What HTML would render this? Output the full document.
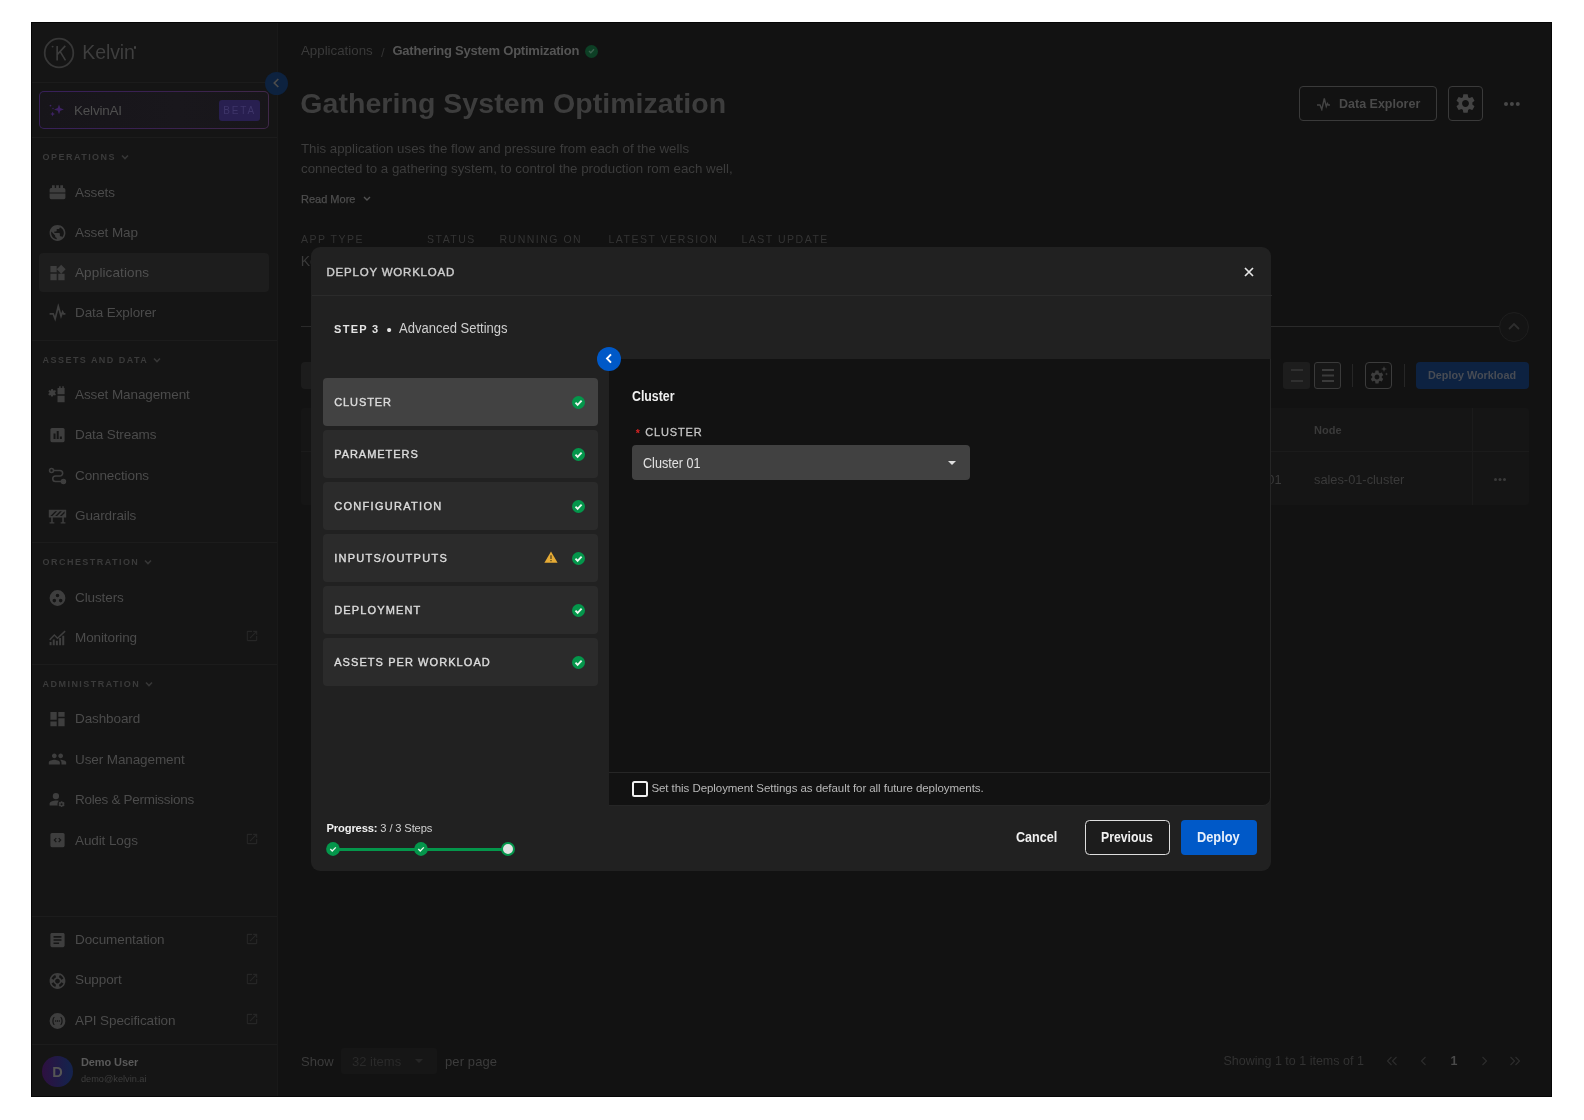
<!DOCTYPE html>
<html lang="en">
<head>
<meta charset="utf-8">
<title>Kelvin - Gathering System Optimization</title>
<style>
*{box-sizing:border-box;margin:0;padding:0}
html,body{width:1584px;height:1120px;background:#fff;overflow:hidden}
body{position:relative;font-family:"Liberation Sans",sans-serif;color:#4a4a4a;-webkit-font-smoothing:antialiased}
.abs,.abs>*{position:absolute}
#frame{position:absolute;left:31px;top:22px;width:1521px;height:1075px;background:#121212;overflow:hidden}
#frame:after{content:"";position:absolute;inset:0;border:1px solid #050505;pointer-events:none;z-index:50}
/* all children of frame use frame coords = page coords - (31,22) via wrapper */
#w{position:absolute;left:-31px;top:-22px;width:1584px;height:1120px;will-change:transform}
#w *{position:absolute}
.t{white-space:nowrap;line-height:1;transform:translateY(-50%) scaleX(var(--sx,1));transform-origin:0 50%}
/* sidebar */
#sb{left:31px;top:22px;width:247px;height:1075px;background:#151515;border-right:1px solid #191919}
.hr{height:1px;background:#1c1c1c;left:31px;width:246px}
.sec{font-size:9px;font-weight:700;letter-spacing:1.45px;color:#3b3b3b;left:42.6px}
#w .sec svg{position:static;display:inline-block;width:8px;height:6px;margin-left:5px;fill:none;stroke:#373737;stroke-width:1.6;vertical-align:-1.3px}
.nav{font-size:13.5px;color:#4b4b4b;left:75px;letter-spacing:-0.1px}
.ico{left:48.4px;width:19px;height:19px;fill:#3e3e3e;transform:translateY(-50%)}
.ext{left:244.8px;width:14px;height:14px;margin-top:-1.3px;fill:#262626;transform:translateY(-50%)}
.chev{width:8px;height:6px;fill:none;stroke:#373737;stroke-width:1.6;transform:translateY(-50%)}
.dsc{font-size:13.3px;color:#3c3c3c}
.lbl{font-size:10.5px;color:#343434;letter-spacing:1.5px}
.mh{font-size:11.5px;font-weight:400;-webkit-text-stroke:.4px #cdcdcd;letter-spacing:.79px;color:#cdcdcd}
.mi{left:323px;width:275px;height:48px;border-radius:4px;background:#2b2b2b}
.ml{left:334.2px;font-size:11px;font-weight:400;-webkit-text-stroke:.4px #dcdcdc;letter-spacing:1.45px;color:#dcdcdc}
.ck{left:571.8px;width:13px;height:13px}
.ck circle{fill:#04964b}
.ck path{fill:none;stroke:#eaf7ef;stroke-width:1.9}
</style>
</head>
<body>
<div id="frame"><div id="w">
<!--SIDEBAR-->
<div id="sb"></div>
<!-- logo -->
<svg style="left:42.75px;top:36.55px;width:32px;height:32px" viewBox="0 0 32 32"><circle cx="16" cy="16" r="14.3" fill="none" stroke="#373737" stroke-width="1.8"/><circle cx="9.6" cy="9.6" r=".95" fill="#3c3c3c"/><path d="M14.150 8.900v14.500M22.300 8.900l-8.150 8.700M17.200 14.600l5.300 8.800" fill="none" stroke="#3d3d3d" stroke-width="1.600"/></svg>
<div class="t" style="left:82.3px;top:52.7px;font-size:19.5px;color:#3e3e3e;letter-spacing:-0.1px">Kelvin</div>
<div style="left:133.9px;top:46px;width:2.6px;height:2.6px;border-radius:50%;background:#444"></div>
<div class="hr" style="top:82px"></div>
<!-- collapse btn -->
<div style="left:265.3px;top:71.8px;width:23px;height:23px;border-radius:50%;background:#0d223f;z-index:3"></div>
<svg style="left:272.4px;top:78.3px;width:8px;height:10px;z-index:4" viewBox="0 0 8 10"><path d="M6.300 1L2.300 5l4 4" fill="none" stroke="#4c4c4c" stroke-width="1.7"/></svg>
<!-- KelvinAI -->
<div style="left:39px;top:91px;width:230px;height:38px;border-radius:5px;background:linear-gradient(90deg,#38205a,#3a2150 55%,#40284a)"></div><div style="left:40.3px;top:92.3px;width:227.4px;height:35.4px;border-radius:4px;background:linear-gradient(90deg,#17151a,#19171c 60%,#18161a)"></div>
<svg style="left:48px;top:103px;width:17px;height:14px" viewBox="0 0 17 14"><path d="M11 1.5l1.3 3.6 3.6 1.3-3.600 1.300L11 11.300 9.700 7.700 6.100 6.400l3.600-1.300z" fill="#3d2263"/><path d="M4.600 8.600l.7 1.700 1.700.7-1.700.7-.7 1.700-.7-1.700-1.700-.7 1.700-.7z" fill="#3d2263"/><circle cx="2.500" cy="2.600" r=".9" fill="#3d2263"/><circle cx="5" cy="5.500" r=".7" fill="#3d2263"/></svg>
<div class="t" style="left:74px;top:111px;font-size:13.5px;color:#4f4f4f;letter-spacing:-0.2px">KelvinAI</div>
<div style="left:219px;top:100px;width:41px;height:21px;border-radius:3px;background:#281f50"></div>
<div class="t" style="left:223.2px;top:111px;font-size:10px;color:#3e3569;letter-spacing:1.9px">BETA</div>
<div class="hr" style="top:137px"></div>

<div class="t sec" style="top:157px">OPERATIONS<svg viewBox="0 0 8 6"><path d="M1 1l3 3 3-3"/></svg></div>

<svg class="ico" style="top:192px" viewBox="0 0 24 24"><path d="M4 7h16a2 2 0 012 2v3.500H2V9a2 2 0 012-2zM2 14h20v5a2 2 0 01-2 2H4a2 2 0 01-2-2zM5 3.500h3.500V7H5zM10.250 3.500h3.500V7h-3.500zM15.500 3.500H19V7h-3.500z"/></svg>
<div class="t nav" style="top:192.5px">Assets</div>
<svg class="ico" style="top:232.500px" viewBox="0 0 24 24"><path d="M12 2C6.480 2 2 6.480 2 12s4.480 10 10 10 10-4.480 10-10S17.520 2 12 2zm-1 17.930c-3.950-.49-7-3.850-7-7.930 0-.62.080-1.210.210-1.790L9 15v1c0 1.100.9 2 2 2v1.930zm6.900-2.540c-.26-.81-1-1.390-1.900-1.390h-1v-3c0-.55-.45-1-1-1H8v-2h2c.55 0 1-.45 1-1V7h2c1.100 0 2-.9 2-2v-.41c2.930 1.190 5 4.060 5 7.410 0 2.080-.8 3.970-2.100 5.390z"/></svg>
<div class="t nav" style="top:232.5px">Asset Map</div>
<div style="left:39px;top:253px;width:230px;height:39px;border-radius:4px;background:#1d1d1d"></div>
<svg class="ico" style="top:272.500px" viewBox="0 0 24 24"><path d="M13 13v8h8v-8h-8zM3 21h8v-8H3v8zM3 3v8h8V3H3zm13.660-1.310L11 7.340 16.660 13l5.660-5.660-5.660-5.650z"/></svg>
<div class="t nav" style="top:273.4px;letter-spacing:.12px;color:#505050">Applications</div>
<svg class="ico" style="top:313px;fill:none;stroke:#3e3e3e;stroke-width:2.2" viewBox="0 0 24 24"><path d="M2 13h4.500l2.500 6.500L13 3.500l3.500 12.500 2-5.500 1.300 2.500H22"/></svg>
<div class="t nav" style="top:313.4px">Data Explorer</div>
<div class="hr" style="top:340px"></div>

<div class="t sec" style="top:359.500px">ASSETS AND DATA<svg viewBox="0 0 8 6"><path d="M1 1l3 3 3-3"/></svg></div>
<svg class="ico" style="top:394.500px" viewBox="0 0 24 24"><path d="M12 3h9v8h-9zM12 13h9v8h-9zM14 1h2v2h-2zM18 1h2v2h-2zM6 4.500l1 2 2-.7 1 1.700-1.500 1.500L10 11l-1 1.700-2-.7-1 2H4l-.7-2-2 .5-1-1.700L2 9 .5 7.500l1-1.700 2 .7.700-2z"/></svg>
<div class="t nav" style="top:394.500px">Asset Management</div>
<svg class="ico" style="top:435px" viewBox="0 0 24 24"><path fill-rule="evenodd" d="M5 3h14a2 2 0 012 2v14a2 2 0 01-2 2H5a2 2 0 01-2-2V5a2 2 0 012-2zm2 7v7h2.500v-7zm4-3v10h2.500V7zm4 7v3h2.500v-3z"/></svg>
<div class="t nav" style="top:435px">Data Streams</div>
<svg class="ico" style="top:475.500px;fill:none;stroke:#3e3e3e;stroke-width:2" viewBox="0 0 24 24"><circle cx="4.500" cy="5" r="2.500"/><path d="M7 5h8a3.500 3.500 0 010 7H9.500a3.500 3.500 0 000 7H17"/><circle cx="19.500" cy="19" r="2.500" fill="#3e3e3e"/></svg>
<div class="t nav" style="top:475.500px">Connections</div>
<svg class="ico" style="top:515.500px" viewBox="0 0 24 24"><path fill-rule="evenodd" d="M1 4h22v10H1zM4 14h2v6h2v1.500H2V20h2zM18 14h2v6h2v1.500h-6V20h2zM3 12l6-6h2.500l-6 6zm6 0l6-6h2.500l-6 6zm6 0l6-6v2.500L17.500 12z"/></svg>
<div class="t nav" style="top:515.500px">Guardrails</div>
<div class="hr" style="top:542px"></div>

<div class="t sec" style="top:562px">ORCHESTRATION<svg viewBox="0 0 8 6"><path d="M1 1l3 3 3-3"/></svg></div>
<svg class="ico" style="top:597.500px" viewBox="0 0 24 24"><path fill-rule="evenodd" d="M12 2a10 10 0 100 20 10 10 0 000-20zm0 4.500a2.300 2.300 0 110 4.600 2.300 2.300 0 010-4.600zM8 13a2.300 2.300 0 110 4.600A2.300 2.300 0 018 13zm8 0a2.300 2.300 0 110 4.600 2.300 2.300 0 010-4.600z"/></svg>
<div class="t nav" style="top:597.500px">Clusters</div>
<svg class="ico" style="top:637.500px" viewBox="0 0 24 24"><path d="M2 17h2.500v4H2zM6 14h2.500v7H6zM10 15.500h2.500V21H10zM14 12h2.500v9H14zM18 9h2.500v12H18zM1.500 13.500L8 7l4 4 9-8.500 1.300 1.500L12 13.500l-4-4-5.200 5.500z"/></svg>
<div class="t nav" style="top:637.500px">Monitoring</div>
<svg class="ext" style="top:637.500px" viewBox="0 0 24 24"><path d="M19 19H5V5h7V3H5c-1.110 0-2 .9-2 2v14c0 1.100.89 2 2 2h14c1.100 0 2-.9 2-2v-7h-2v7zM14 3v2h3.590l-9.830 9.830 1.410 1.410L19 6.410V10h2V3h-7z"/></svg>
<div class="hr" style="top:664px"></div>

<div class="t sec" style="top:683.500px">ADMINISTRATION<svg viewBox="0 0 8 6"><path d="M1 1l3 3 3-3"/></svg></div>
<svg class="ico" style="top:719px" viewBox="0 0 24 24"><path d="M3 13h8V3H3v10zm0 8h8v-6H3v6zm10 0h8V11h-8v10zm0-18v6h8V3h-8z"/></svg>
<div class="t nav" style="top:719px">Dashboard</div>
<svg class="ico" style="top:759px" viewBox="0 0 24 24"><path d="M16 11c1.660 0 2.990-1.340 2.990-3S17.660 5 16 5c-1.660 0-3 1.340-3 3s1.340 3 3 3zm-8 0c1.660 0 2.990-1.340 2.990-3S9.660 5 8 5C6.340 5 5 6.340 5 8s1.340 3 3 3zm0 2c-2.330 0-7 1.170-7 3.500V19h14v-2.500c0-2.330-4.670-3.500-7-3.500zm8 0c-.29 0-.62.020-.97.050 1.160.84 1.970 1.970 1.970 3.450V19h6v-2.500c0-2.330-4.670-3.500-7-3.500z"/></svg>
<div class="t nav" style="top:759.500px">User Management</div>
<svg class="ico" style="top:799.500px" viewBox="0 0 24 24"><circle cx="10" cy="7" r="4"/><path d="M10 12.500c1.200 0 2.500.2 3.700.6-1 1.100-1.700 2.600-1.700 4.200 0 .6.100 1.200.3 1.700H2v-2.500c0-2.700 5.300-4 8-4zM18 13.500l.6 1.400 1.500-.3.900 1.500-1 1.100 1 1.100-.9 1.500-1.500-.3-.6 1.400h-1.700l-.6-1.400-1.500.3-.9-1.500 1-1.100-1-1.100.9-1.500 1.500.3.600-1.400zm-.85 2.600a1.200 1.200 0 100 2.400 1.200 1.200 0 000-2.400z" fill-rule="evenodd"/></svg>
<div class="t nav" style="top:800px;letter-spacing:-0.3px">Roles &amp; Permissions</div>
<svg class="ico" style="top:840px" viewBox="0 0 24 24"><path fill-rule="evenodd" d="M5 3h14a2 2 0 012 2v14a2 2 0 01-2 2H5a2 2 0 01-2-2V5a2 2 0 012-2zm5 6l-3 3 3 3 1-1-2-2 2-2zm4 0l-1 1 2 2-2 2 1 1 3-3z"/></svg>
<div class="t nav" style="top:840.500px">Audit Logs</div>
<svg class="ext" style="top:840.500px" viewBox="0 0 24 24"><path d="M19 19H5V5h7V3H5c-1.110 0-2 .9-2 2v14c0 1.100.89 2 2 2h14c1.100 0 2-.9 2-2v-7h-2v7zM14 3v2h3.590l-9.830 9.830 1.410 1.410L19 6.410V10h2V3h-7z"/></svg>
<div class="hr" style="top:916px"></div>

<svg class="ico" style="top:940px" viewBox="0 0 24 24"><path d="M19 3H5c-1.100 0-2 .9-2 2v14c0 1.100.9 2 2 2h14c1.100 0 2-.9 2-2V5c0-1.100-.9-2-2-2zm-5 14H7v-2h7v2zm3-4H7v-2h10v2zm0-4H7V7h10v2z"/></svg>
<div class="t nav" style="top:940px">Documentation</div>
<svg class="ext" style="top:940.500px" viewBox="0 0 24 24"><path d="M19 19H5V5h7V3H5c-1.110 0-2 .9-2 2v14c0 1.100.89 2 2 2h14c1.100 0 2-.9 2-2v-7h-2v7zM14 3v2h3.590l-9.830 9.830 1.410 1.410L19 6.410V10h2V3h-7z"/></svg>
<svg class="ico" style="top:980.500px" viewBox="0 0 24 24"><path d="M12 2C6.480 2 2 6.480 2 12s4.480 10 10 10 10-4.480 10-10S17.520 2 12 2zm7.460 7.120l-2.780 1.150c-.51-1.360-1.580-2.440-2.950-2.940l1.150-2.780c2.100.8 3.770 2.470 4.580 4.570zM12 15c-1.660 0-3-1.340-3-3s1.340-3 3-3 3 1.340 3 3-1.340 3-3 3zM9.130 4.540l1.170 2.780c-1.380.5-2.470 1.590-2.980 2.970L4.540 9.130c.81-2.110 2.480-3.780 4.590-4.590zM4.540 14.870l2.780-1.150c.51 1.380 1.590 2.460 2.970 2.960l-1.170 2.780c-2.100-.81-3.770-2.480-4.580-4.590zm10.340 4.590l-1.150-2.780c1.370-.51 2.450-1.590 2.950-2.970l2.780 1.170c-.81 2.100-2.480 3.770-4.580 4.580z"/></svg>
<div class="t nav" style="top:980.1px">Support</div>
<svg class="ext" style="top:980.500px" viewBox="0 0 24 24"><path d="M19 19H5V5h7V3H5c-1.110 0-2 .9-2 2v14c0 1.100.89 2 2 2h14c1.100 0 2-.9 2-2v-7h-2v7zM14 3v2h3.590l-9.830 9.830 1.410 1.410L19 6.410V10h2V3h-7z"/></svg>
<svg class="ico" style="top:1020.500px" viewBox="0 0 24 24"><path fill-rule="evenodd" d="M12 2a10 10 0 100 20 10 10 0 000-20zM8.500 7.500C6.500 9 6.500 15 8.500 16.500l-.9.900C4.800 15 4.800 9 7.600 6.600zm7 0l.9-.9C19.200 9 19.200 15 16.400 17.400l-.9-.9C17.500 15 17.500 9 15.500 7.500zM9 11.200h1.400v1.600H9zm2.300 0h1.400v1.600h-1.400zm2.300 0H15v1.600h-1.400z"/></svg>
<div class="t nav" style="top:1021px">API Specification</div>
<svg class="ext" style="top:1020.500px" viewBox="0 0 24 24"><path d="M19 19H5V5h7V3H5c-1.110 0-2 .9-2 2v14c0 1.100.89 2 2 2h14c1.100 0 2-.9 2-2v-7h-2v7zM14 3v2h3.590l-9.830 9.830 1.410 1.410L19 6.410V10h2V3h-7z"/></svg>
<div class="hr" style="top:1043.500px"></div>
<div style="left:42.2px;top:1055.6px;width:31px;height:31px;border-radius:50%;background:linear-gradient(90deg,#2e1040,#15224c 90%)"></div>
<div class="t" style="left:52.2px;top:1071.5px;font-size:14.5px;font-weight:700;color:#555">D</div>
<div class="t" style="left:81px;top:1061.8px;font-size:11px;font-weight:700;color:#5a5a5a;letter-spacing:-0.1px">Demo User</div>
<div class="t" style="left:81px;top:1080.25px;font-size:9.2px;color:#3e3e3e">demo@kelvin.ai</div>
<!--MAIN-->
<div class="t" style="left:301px;top:51px;font-size:13.3px;color:#3a3a3a">Applications</div>
<div class="t" style="left:381px;top:51.500px;font-size:13px;color:#333">/</div>
<div class="t" id="bc2" style="left:392.500px;top:50.4px;font-size:13px;font-weight:700;color:#555;letter-spacing:-0.24px">Gathering System Optimization</div>
<div style="left:584.500px;top:44.8px;width:13px;height:13px;border-radius:50%;background:#0d3f25"></div>
<svg style="left:587.500px;top:48.3px;width:7px;height:6px" viewBox="0 0 7 6"><path d="M1 3l1.800 1.800L6 1.300" fill="none" stroke="#3d6350" stroke-width="1.300"/></svg>

<div class="t" id="ttl" style="left:300.3px;top:103.25px;font-size:28.5px;font-weight:700;color:#3d3d3d;letter-spacing:0.05px">Gathering System Optimization</div>
<div class="t dsc" id="d1" style="left:301px;top:148.500px">This application uses the flow and pressure from each of the wells</div>
<div class="t dsc" id="d2" style="left:301px;top:168.500px">connected to a gathering system, to control the production rom each well,</div>
<div class="t" style="left:301px;top:199px;font-size:11px;color:#4e4e4e;-webkit-text-stroke:.25px #4e4e4e">Read More</div>
<svg style="left:363px;top:196px;width:8px;height:6px" viewBox="0 0 8 6"><path d="M1 1l3 3 3-3" fill="none" stroke="#525252" stroke-width="1.400"/></svg>

<div class="t lbl" style="left:301px;top:239px">APP TYPE</div>
<div class="t lbl" style="left:427px;top:239px">STATUS</div>
<div class="t lbl" style="left:499.500px;top:239px">RUNNING ON</div>
<div class="t lbl" style="left:608.500px;top:239px">LATEST VERSION</div>
<div class="t lbl" style="left:741.500px;top:239px">LAST UPDATE</div>
<div class="t" style="left:300.7px;top:260.6px;font-size:14px;color:#3a3a3a">Kelvin</div>

<!-- top-right buttons -->
<div style="left:1299px;top:86px;width:138px;height:35px;border:1px solid #3a3a3a;border-radius:4px"></div>
<svg style="left:1316px;top:97px;width:15px;height:14px" viewBox="0 0 15 14"><path d="M1 8h3l1.800 4.500L8.300 1.500l2 8 1.200-3 .9 1.500H14" fill="none" stroke="#444" stroke-width="1.400"/></svg>
<div class="t" style="left:1339px;top:104px;font-size:12.500px;font-weight:700;color:#4a4a4a">Data Explorer</div>
<div style="left:1448px;top:86px;width:35px;height:35px;border:1px solid #3a3a3a;border-radius:4px"></div>
<svg style="left:1454px;top:92px;width:23px;height:23px;fill:#444" viewBox="0 0 24 24"><path d="M19.140 12.940c.04-.3.060-.61.060-.94 0-.32-.020-.64-.070-.94l2.030-1.580c.18-.14.23-.41.120-.61l-1.920-3.320c-.12-.22-.37-.29-.59-.22l-2.390.96c-.5-.38-1.030-.7-1.620-.94l-.36-2.540c-.04-.24-.24-.41-.48-.41h-3.840c-.24 0-.43.170-.47.410l-.36 2.540c-.59.240-1.130.570-1.620.94l-2.390-.96c-.22-.08-.47 0-.59.220L2.740 8.870c-.12.210-.08.470.12.610l2.030 1.580c-.05.300-.09.630-.09.940s.02.640.07.940l-2.030 1.580c-.18.140-.23.410-.12.610l1.920 3.320c.12.220.37.290.59.220l2.390-.96c.5.380 1.030.7 1.620.94l.36 2.540c.05.240.24.410.48.410h3.840c.24 0 .44-.17.470-.41l.36-2.540c.59-.24 1.130-.56 1.620-.94l2.390.96c.22.080.47 0 .59-.22l1.920-3.320c.12-.22.070-.47-.12-.61l-2.010-1.580zM12 15.600c-1.980 0-3.600-1.620-3.600-3.600s1.620-3.600 3.600-3.600 3.600 1.620 3.600 3.600-1.620 3.600-3.600 3.600z"/></svg>
<div style="left:1503.8px;top:101.6px;width:4px;height:4px;border-radius:50%;background:#484848;box-shadow:5.9px 0 0 #484848,11.8px 0 0 #484848"></div>

<!-- section divider + collapse -->
<div style="left:301px;top:326px;width:1198px;height:1px;background:#2a2a2a"></div>
<div style="left:1498.500px;top:311.500px;width:30px;height:30px;border-radius:50%;border:1px solid #1f1f1f;background:#141414"></div>
<svg style="left:1507.500px;top:322px;width:12px;height:8px" viewBox="0 0 12 8"><path d="M1 7l5-5 5 5" fill="none" stroke="#2e2e2e" stroke-width="1.800"/></svg>

<!-- toolbar -->
<div style="left:301px;top:362px;width:250px;height:27px;border-radius:4px;background:#1c1c1c"></div>
<div style="left:1283px;top:362px;width:27px;height:27px;border-radius:3px;background:#1d1d1d"></div>
<div style="left:1291px;top:369px;width:11.5px;height:1.5px;background:#303030;box-shadow:0 11px 0 #303030"></div>
<div style="left:1314px;top:362px;width:27px;height:27px;border-radius:3px;border:1px solid #3a3a3a;background:#171717"></div>
<div style="left:1321.500px;top:369px;width:12px;height:1.5px;background:#3b3b3b;box-shadow:0 5.500px 0 #3b3b3b,0 11px 0 #3b3b3b"></div>
<div style="left:1352px;top:364px;width:1px;height:23px;background:#262626"></div>
<div style="left:1364.500px;top:362px;width:27px;height:27px;border-radius:4px;border:1px solid #3c3c3c"></div>
<svg style="left:1369px;top:368.500px;width:16px;height:16px;fill:#3d3d3d" viewBox="0 0 24 24"><path d="M19.140 12.940c.04-.3.060-.61.060-.94 0-.32-.020-.64-.070-.94l2.030-1.580c.18-.14.23-.41.120-.61l-1.920-3.320c-.12-.22-.37-.29-.59-.22l-2.390.96c-.5-.38-1.030-.7-1.620-.94l-.36-2.540c-.04-.24-.24-.41-.48-.41h-3.840c-.24 0-.43.170-.47.410l-.36 2.540c-.59.240-1.130.570-1.620.94l-2.390-.96c-.22-.08-.47 0-.59.220L2.740 8.870c-.12.210-.08.470.12.610l2.030 1.580c-.05.300-.09.630-.09.940s.02.640.07.940l-2.030 1.580c-.18.140-.23.410-.12.610l1.920 3.320c.12.220.37.290.59.220l2.390-.96c.5.380 1.030.7 1.620.94l.36 2.540c.05.240.24.410.48.410h3.840c.24 0 .44-.17.470-.41l.36-2.540c.59-.24 1.130-.56 1.620-.94l2.390.96c.22.080.47 0 .59-.22l1.920-3.320c.12-.22.070-.47-.12-.61l-2.010-1.580zM12 15.600c-1.980 0-3.600-1.620-3.600-3.600s1.620-3.600 3.600-3.600 3.600 1.620 3.600 3.600-1.620 3.600-3.600 3.600z"/></svg>
<svg style="left:1380px;top:366px;width:8px;height:10px;fill:#3d3d3d" viewBox="0 0 8 10"><path d="M4 0l.8 2.200L7 3l-2.200.8L4 6l-.8-2.200L1 3l2.200-.8zM6.500 6.500l.4 1.100 1.100.4-1.100.4-.4 1.100-.4-1.100L5 8l1.100-.4z"/></svg>
<div style="left:1403.500px;top:364px;width:1px;height:23px;background:#262626"></div>
<div style="left:1415.500px;top:362px;width:113.500px;height:27px;border-radius:4px;background:#0d2241"></div>
<div class="t" style="left:1428px;top:374.8px;font-size:10.8px;font-weight:700;color:#484c54">Deploy Workload</div>

<!-- table -->
<div style="left:301px;top:408px;width:1228px;height:97px;background:#151515;border-radius:3px"></div>
<div style="left:301px;top:451px;width:1228px;height:1px;background:#1b1b1b"></div>
<div style="left:1471.500px;top:408px;width:1px;height:97px;background:#1b1b1b"></div>
<div class="t" style="left:1314px;top:429.6px;font-size:11px;font-weight:700;color:#3a3a3a">Node</div>
<div class="t" style="left:1267.3px;top:479.75px;font-size:12.8px;color:#3a3a3a">01</div>
<div class="t" style="left:1314px;top:479.75px;font-size:12.8px;color:#3a3a3a">sales-01-cluster</div>
<div style="left:1493.500px;top:478px;width:3px;height:3px;border-radius:50%;background:#3a3a3a;box-shadow:4.500px 0 0 #3a3a3a,9px 0 0 #3a3a3a"></div>

<!-- pagination -->
<div class="t" style="left:301px;top:1061px;font-size:13px;color:#3c3c3c">Show</div>
<div style="left:341px;top:1047.500px;width:96px;height:26px;border-radius:3px;background:#161616"></div>
<div class="t" style="left:352px;top:1061px;font-size:13px;color:#2a2a2a">32 items</div>
<div style="left:415px;top:1059px;width:0;height:0;border-left:4px solid transparent;border-right:4px solid transparent;border-top:4px solid #262626"></div>
<div class="t" style="left:445px;top:1061px;font-size:13px;letter-spacing:.1px;color:#3c3c3c">per page</div>
<div class="t" id="shw" style="left:1223.500px;top:1061px;font-size:12.500px;color:#323232">Showing 1 to 1 items of 1</div>
<svg style="left:1386px;top:1056px;width:12px;height:10px" viewBox="0 0 12 10"><path d="M5.500 1L1.500 5l4 4M10.500 1L6.500 5l4 4" fill="none" stroke="#2c2c2c" stroke-width="1.200"/></svg>
<svg style="left:1420px;top:1056px;width:7px;height:10px" viewBox="0 0 7 10"><path d="M5.500 1L1.500 5l4 4" fill="none" stroke="#2c2c2c" stroke-width="1.200"/></svg>
<div class="t" style="left:1450.500px;top:1061px;font-size:12.500px;font-weight:700;color:#4a4a4a">1</div>
<svg style="left:1481px;top:1056px;width:7px;height:10px" viewBox="0 0 7 10"><path d="M1.500 1l4 4-4 4" fill="none" stroke="#2c2c2c" stroke-width="1.200"/></svg>
<svg style="left:1509px;top:1056px;width:12px;height:10px" viewBox="0 0 12 10"><path d="M1.500 1l4 4-4 4M6.500 1l4 4-4 4" fill="none" stroke="#2c2c2c" stroke-width="1.200"/></svg>
<!--MODAL-->
<div id="md" style="left:311.1px;top:247.1px;width:960.4px;height:623.9px;border-radius:9px;background:#212121"></div>
<div class="t mh" style="left:326.500px;top:272.5px">DEPLOY WORKLOAD</div>
<svg style="left:1243.500px;top:266.500px;width:10px;height:10px" viewBox="0 0 10 10"><path d="M1 1l8 8M9 1L1 9" fill="none" stroke="#e6e6e6" stroke-width="1.700"/></svg>
<div style="left:311.500px;top:294.500px;width:960px;height:1px;background:#2b2b2b"></div>
<div class="t" style="left:334px;top:329px;font-size:11px;font-weight:700;letter-spacing:1.300px;color:#e4e4e4">STEP 3</div>
<div class="t" id="blt" style="left:386.5px;top:328.7px;font-size:15px;color:#e4e4e4">•</div>
<div class="t" id="adv" style="left:398.7px;top:328.25px;font-size:14px;color:#cfcfcf;--sx:.93">Advanced Settings</div>

<!-- content panel -->
<div style="left:609px;top:359px;width:662px;height:446.8px;background:#121212;border-right:1px solid #262626;border-bottom:1px solid #262626;border-bottom-right-radius:8px"></div>
<div style="left:597px;top:347px;width:24px;height:24px;border-radius:50%;background:#0059c8"></div>
<svg style="left:604.500px;top:353px;width:8px;height:11px" viewBox="0 0 8 11"><path d="M6 1.300L2 5.500l4 4.200" fill="none" stroke="#fff" stroke-width="1.900"/></svg>

<!-- left steps -->
<div class="mi" style="top:378px;background:#424242"></div>
<div class="mi" style="top:430px"></div>
<div class="mi" style="top:482px"></div>
<div class="mi" style="top:534px"></div>
<div class="mi" style="top:586px"></div>
<div class="mi" style="top:638px"></div>
<div class="t ml" style="top:402px;letter-spacing:0.9px">CLUSTER</div>
<div class="t ml" style="top:454px;letter-spacing:0.96px">PARAMETERS</div>
<div class="t ml" style="top:506px;letter-spacing:1.3px">CONFIGURATION</div>
<div class="t ml" style="top:558px;letter-spacing:1.28px">INPUTS/OUTPUTS</div>
<div class="t ml" style="top:610px;letter-spacing:1.14px">DEPLOYMENT</div>
<div class="t ml" style="top:662px;letter-spacing:1.07px">ASSETS PER WORKLOAD</div>
<svg class="ck" style="top:395.8px" viewBox="0 0 13 13"><circle cx="6.500" cy="6.500" r="6.500"/><path d="M3.500 6.700l2.100 2.100 4-4.100"/></svg>
<svg class="ck" style="top:447.8px" viewBox="0 0 13 13"><circle cx="6.500" cy="6.500" r="6.500"/><path d="M3.500 6.700l2.100 2.100 4-4.100"/></svg>
<svg class="ck" style="top:499.8px" viewBox="0 0 13 13"><circle cx="6.500" cy="6.500" r="6.500"/><path d="M3.500 6.700l2.100 2.100 4-4.100"/></svg>
<svg class="ck" style="top:551.8px" viewBox="0 0 13 13"><circle cx="6.500" cy="6.500" r="6.500"/><path d="M3.500 6.700l2.100 2.100 4-4.100"/></svg>
<svg class="ck" style="top:603.8px" viewBox="0 0 13 13"><circle cx="6.500" cy="6.500" r="6.500"/><path d="M3.500 6.700l2.100 2.100 4-4.100"/></svg>
<svg class="ck" style="top:655.8px" viewBox="0 0 13 13"><circle cx="6.500" cy="6.500" r="6.500"/><path d="M3.500 6.700l2.100 2.100 4-4.100"/></svg>
<svg style="left:543.9px;top:551.3px;width:14px;height:12px" viewBox="0 0 14 12"><path d="M7 .4l6.600 11.300H.4z" fill="#e6ab35"/><path d="M7 4.200v3.700M7 9v1.300" stroke="#4a3c1c" stroke-width="1.200" fill="none"/></svg>

<!-- right content -->
<div class="t" style="left:632.2px;top:396.25px;font-size:14px;font-weight:700;color:#f0f0f0;--sx:.88">Cluster</div>
<div class="t" style="left:635.8px;top:432.8px;font-size:10.5px;font-weight:700;color:#d82424">*</div>
<div class="t" style="left:645.2px;top:432px;font-size:11px;font-weight:400;-webkit-text-stroke:.3px #c4c4c4;color:#c4c4c4;letter-spacing:.85px">CLUSTER</div>
<div style="left:632px;top:445px;width:338px;height:35px;border-radius:4px;background:#414141"></div>
<div class="t" style="left:642.7px;top:463.25px;font-size:14px;color:#e2e2e2;--sx:.9">Cluster 01</div>
<div style="left:948px;top:461px;width:0;height:0;border-left:4px solid transparent;border-right:4px solid transparent;border-top:4px solid #e0e0e0"></div>

<div style="left:609px;top:771.500px;width:661px;height:1px;background:#262626"></div>
<div style="left:632px;top:781px;width:15.500px;height:15.500px;border:2px solid #f2f2f2;border-radius:2.500px"></div>
<div class="t" id="cbt" style="left:651.4px;top:789.25px;font-size:11.5px;color:#b8b8b8;letter-spacing:-0.06px">Set this Deployment Settings as default for all future deployments.</div>

<!-- footer -->
<div class="t" id="prg" style="left:326.500px;top:829px;font-size:11.2px;color:#d0d0d0;letter-spacing:-0.15px"><b style="position:static;color:#f0f0f0">Progress:</b> 3 / 3 Steps</div>
<div style="left:333px;top:848px;width:175px;height:2.6px;background:#04964b"></div>
<svg class="ck" style="left:326.4px;top:842.3px;width:14px;height:14px" viewBox="0 0 13 13"><circle cx="6.500" cy="6.500" r="6.400"/><path style="stroke-width:1.3" d="M4 6.600l1.800 1.800 3.300-3.400"/></svg>
<svg class="ck" style="left:413.8px;top:842.3px;width:14px;height:14px" viewBox="0 0 13 13"><circle cx="6.500" cy="6.500" r="6.400"/><path style="stroke-width:1.3" d="M4 6.600l1.800 1.800 3.300-3.400"/></svg>
<div style="left:501.3px;top:842.3px;width:14px;height:14px;border-radius:50%;background:#e2e2e2;border:2px solid #04964b"></div>

<div class="t" style="left:1015.7px;top:837.25px;font-size:14px;font-weight:700;color:#f0f0f0;--sx:.898">Cancel</div>
<div style="left:1085px;top:820.2px;width:85px;height:35px;border:1.9px solid #dedede;border-radius:4.5px;background:#1c1c1c"></div>
<div class="t" style="left:1101px;top:837.25px;font-size:14px;font-weight:700;color:#f0f0f0;--sx:.876">Previous</div>
<div style="left:1181.1px;top:820.2px;width:75.6px;height:35px;border-radius:4px;background:#0059c8"></div>
<div class="t" style="left:1197.3px;top:837.25px;font-size:14px;font-weight:700;color:#e8f0fb;--sx:.914">Deploy</div>
</div></div>
</body>
</html>
